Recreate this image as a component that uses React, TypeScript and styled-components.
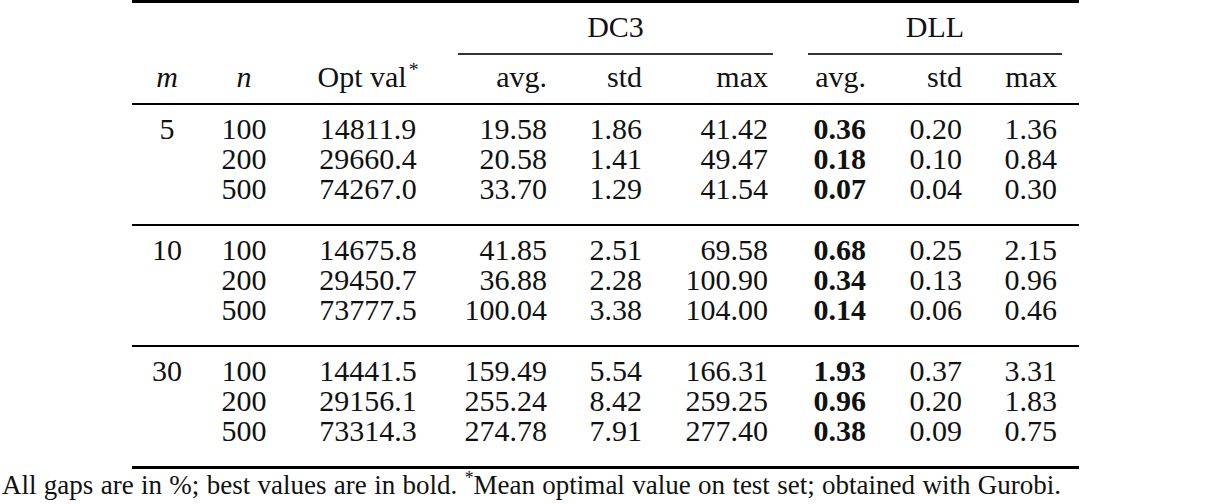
import React from 'react';
import styled, { createGlobalStyle } from 'styled-components';

const GlobalStyle = createGlobalStyle`
  html, body {
    margin: 0;
    padding: 0;
    background: #fff;
  }
  body {
    font-family: "Liberation Serif", "Times New Roman", serif;
    color: #000;
  }
`;

// column widths of the booktabs-like table, 947px in total
const COLS = '70px 84px 164px 108px 95px 127px 97px 96px 106px';

type Align = 'center' | 'right';
const colSpec: { align: Align; pad: number }[] = [
  { align: 'center', pad: 0 },
  { align: 'center', pad: 0 },
  { align: 'center', pad: 0 },
  { align: 'right', pad: 11 },
  { align: 'right', pad: 11 },
  { align: 'right', pad: 12 },
  { align: 'right', pad: 11 },
  { align: 'right', pad: 11 },
  { align: 'right', pad: 22 },
];

const Page = styled.div`
  width: 1216px;
  height: 504px;
  overflow: hidden;
  background: #fff;
`;

const Table = styled.div`
  width: 947px;
  margin-left: 132px;
  border-top: 3px solid #000;
  border-bottom: 3px solid #000;
  font-size: 30px;
  line-height: 30px;
  color: #111;
`;

const Row = styled.div`
  display: grid;
  grid-template-columns: ${COLS};
`;

const GroupRow = styled(Row)`
  padding-top: 9px;
`;

const HeadRow = styled(Row)`
  padding: 7px 0 11px;
`;

const Block = styled.div`
  border-top: 2px solid #000;
  padding: 9px 0 20px;
`;

const Group = styled.div<{ $start: number; $l: number; $r: number }>`
  grid-column: ${(p) => p.$start} / span 3;
  margin: 0 ${(p) => p.$r}px 0 ${(p) => p.$l}px;
  padding-bottom: 11px;
  border-bottom: 2px solid #333;
  text-align: center;
`;

const Cell = styled.div<{ $align: Align; $pad: number; $bold?: boolean; $italic?: boolean }>`
  text-align: ${(p) => p.$align};
  padding-right: ${(p) => p.$pad}px;
  font-weight: ${(p) => (p.$bold ? 700 : 400)};
  font-style: ${(p) => (p.$italic ? 'italic' : 'normal')};
  white-space: nowrap;
`;

const Sup = styled.span<{ $gap?: number }>`
  font-size: 0.66em;
  line-height: 0;
  vertical-align: 0.55em;
  margin-left: ${(p) => p.$gap ?? 0}px;
`;

const Caption = styled.p`
  margin: 1px 0 0 2px;
  font-size: 27px;
  line-height: 30px;
  word-spacing: 0.6px;
  white-space: nowrap;
  color: #111;
`;

const blocks = [
  {
    m: '5',
    rows: [
      ['100', '14811.9', '19.58', '1.86', '41.42', '0.36', '0.20', '1.36'],
      ['200', '29660.4', '20.58', '1.41', '49.47', '0.18', '0.10', '0.84'],
      ['500', '74267.0', '33.70', '1.29', '41.54', '0.07', '0.04', '0.30'],
    ],
  },
  {
    m: '10',
    rows: [
      ['100', '14675.8', '41.85', '2.51', '69.58', '0.68', '0.25', '2.15'],
      ['200', '29450.7', '36.88', '2.28', '100.90', '0.34', '0.13', '0.96'],
      ['500', '73777.5', '100.04', '3.38', '104.00', '0.14', '0.06', '0.46'],
    ],
  },
  {
    m: '30',
    rows: [
      ['100', '14441.5', '159.49', '5.54', '166.31', '1.93', '0.37', '3.31'],
      ['200', '29156.1', '255.24', '8.42', '259.25', '0.96', '0.20', '1.83'],
      ['500', '73314.3', '274.78', '7.91', '277.40', '0.38', '0.09', '0.75'],
    ],
  },
];

const headings: React.ReactNode[] = [
  'm',
  'n',
  <>Opt val<Sup $gap={2}>*</Sup></>,
  'avg.',
  'std',
  'max',
  'avg.',
  'std',
  'max',
];

const App = () => {
  return (
    <Page>
      <GlobalStyle />
      <Table>
        <GroupRow>
          <Group $start={4} $l={8} $r={7}>DC3</Group>
          <Group $start={7} $l={28} $r={17}>DLL</Group>
        </GroupRow>
        <HeadRow>
          {headings.map((h, i) => (
            <Cell key={i} $align={colSpec[i].align} $pad={colSpec[i].pad} $italic={i < 2}>
              {h}
            </Cell>
          ))}
        </HeadRow>
        {blocks.map((b) => (
          <Block key={b.m}>
            {b.rows.map((r, ri) => (
              <Row key={ri}>
                {[ri === 0 ? b.m : '', ...r].map((v, ci) => (
                  <Cell key={ci} $align={colSpec[ci].align} $pad={colSpec[ci].pad} $bold={ci === 6}>
                    {v}
                  </Cell>
                ))}
              </Row>
            ))}
          </Block>
        ))}
      </Table>
      <Caption>
        All gaps are in %; best values are in bold. <Sup>*</Sup>Mean optimal value on test set;
        obtained with Gurobi.
      </Caption>
    </Page>
  );
};

export default App;
